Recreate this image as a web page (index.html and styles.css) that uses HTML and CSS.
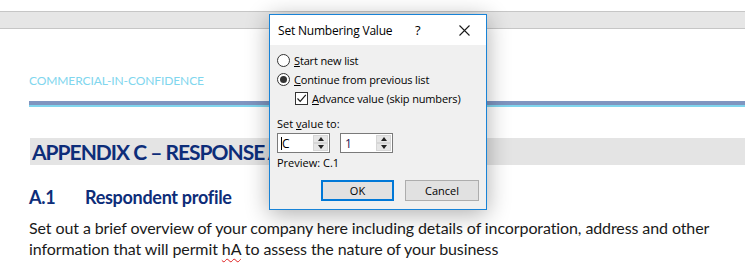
FILE: index.html
```html
<!DOCTYPE html>
<html lang="en">

<head>
    <meta charset="utf-8">
    <title>Set Numbering Value</title>
    <link rel="stylesheet" href="styles.css">
</head>

<body>
    <div class="ruler-band"></div>

    <main class="page">
        <p class="confidential">COMMERCIAL-IN-CONFIDENCE</p>
        <div class="header-rule"></div>
        <h1 class="appendix">APPENDIX C – RESPONSE A</h1>
        <h2 class="section"><span class="num">A.1</span>Respondent profile</h2>
        <p class="body-text">Set out a brief overview of your company here including details of incorporation, address and other
            information that will permit <span class="spell">hA</span> to assess the nature of your business</p>
    </main>

    <!-- dialog sits on top of the document -->
    <div class="dialog">
        <div class="title-bar">
            <span class="title">Set Numbering Value</span>
            <span class="help">?</span>
            <svg class="close" width="11" height="11" viewBox="0 0 11 11">
                <path d="M0.5 0.5 L10.5 10.5 M10.5 0.5 L0.5 10.5" stroke="#1a1a1a" stroke-width="1.1" fill="none" />
            </svg>
        </div>
        <div class="dialog-body">
            <label class="option">
                <span class="radio"></span>
                <span><u>S</u>tart new list</span>
            </label>
            <label class="option">
                <span class="radio checked"></span>
                <span><u>C</u>ontinue from previous list</span>
            </label>
            <label class="option sub">
                <span class="checkbox">
                    <svg width="11" height="11" viewBox="0 0 11 11">
                        <path d="M1.5 5.5 L4.2 8.3 L9.8 1.8" stroke="#1a1a1a" stroke-width="1.2" fill="none" />
                    </svg>
                </span>
                <span><u>A</u>dvance value (skip numbers)</span>
            </label>

            <p class="set-label">Set <u>v</u>alue to:</p>
            <div class="inputs">
                <div class="spin">
                    <span class="spin-value"><span class="caret"></span>C</span>
                    <span class="spin-buttons">
                        <span class="spin-btn"><span class="arrow up"></span></span>
                        <span class="spin-btn"><span class="arrow down"></span></span>
                    </span>
                </div>
                <div class="spin">
                    <span class="spin-value level">1</span>
                    <span class="spin-buttons">
                        <span class="spin-btn"><span class="arrow up"></span></span>
                        <span class="spin-btn"><span class="arrow down"></span></span>
                    </span>
                </div>
            </div>
            <p class="preview">Preview: C.1</p>

            <div class="buttons">
                <button class="btn default">OK</button>
                <button class="btn">Cancel</button>
            </div>
        </div>
    </div>
</body>

</html>
```

FILE: styles.css
```css
* {
    padding: 0;
    margin: 0;
    box-sizing: border-box;
}

body {
    width: 745px;
    height: 279px;
    overflow: hidden;
    background-color: white;
    position: relative;
    font-family: Lato, sans-serif;
}

.ruler-band {
    margin-top: 11px;
    height: 18px;
    background-color: #e6e6e6;
    border-top: 1px solid #c6c6c6;
    border-bottom: 1px solid #c6c6c6;
}

.page {
    padding-left: 29px;
}

.confidential {
    margin-top: 44px;
    font-size: 12px;
    line-height: 16px;
    color: #80d6ee;
    letter-spacing: -0.1px;
}

.header-rule {
    margin-top: 12px;
    height: 6px;
    border-top: 4px solid #7f95c0;
    background-color: #80d6ee;
}

.appendix {
    margin-top: 31px;
    margin-left: 1px;
    height: 27px;
    padding-left: 2px;
    background-color: #e4e4e4;
    font-size: 21px;
    line-height: 28px;
    font-weight: 700;
    color: #0d2d79;
    letter-spacing: -1px;
}

.section {
    margin-top: 22px;
    font-size: 18px;
    line-height: 20px;
    font-weight: 700;
    color: #0d2d79;
    letter-spacing: -0.3px;
}

.section .num {
    display: inline-block;
    width: 56px;
}

.body-text {
    margin-top: 10px;
    font-size: 16px;
    line-height: 21px;
    color: #1a1a1a;
    width: 700px;
    letter-spacing: -0.1px;
}

.spell {
    text-decoration: underline wavy #e02020;
    text-decoration-thickness: 1px;
    text-underline-offset: 3px;
}

/* dialog */

.dialog {
    position: absolute;
    left: 269px;
    top: 14px;
    width: 218px;
    height: 196px;
    border: 1px solid #1883d7;
    background-color: #f0f0f0;
    box-shadow: 0 4px 22px rgba(0, 0, 0, 0.32);
    font-family: "Open Sans", sans-serif;
    font-size: 11px;
    color: #000;
}

.title-bar {
    height: 30px;
    background-color: white;
    display: flex;
    align-items: center;
    padding-left: 8px;
}

.title {
    font-size: 12px;
    letter-spacing: -0.2px;
    width: 137px;
}

.help {
    font-size: 13px;
    width: 44px;
}

.dialog-body {
    padding: 6px 0 0 7px;
}

.option {
    display: flex;
    align-items: center;
    gap: 4px;
    height: 19px;
    letter-spacing: -0.15px;
}

.option.sub {
    padding-left: 18px;
}

.radio {
    width: 13px;
    height: 13px;
    border: 1px solid #333;
    border-radius: 50%;
    background-color: white;
    display: flex;
    align-items: center;
    justify-content: center;
}

.radio.checked::after {
    content: "";
    width: 7px;
    height: 7px;
    border-radius: 50%;
    background-color: #333;
}

.checkbox {
    width: 13px;
    height: 13px;
    border: 1px solid #333;
    background-color: white;
    display: flex;
    align-items: center;
    justify-content: center;
}

.set-label {
    margin-top: 8px;
    line-height: 15px;
}

.inputs {
    display: flex;
    gap: 10px;
    margin-top: 2px;
}

.spin {
    display: flex;
    width: 53px;
    height: 20px;
    border: 1px solid #7a7a7a;
    background-color: white;
    padding: 1px;
}

.spin-value {
    flex: 1;
    display: flex;
    align-items: center;
    padding-left: 2px;
    font-size: 12px;
}

.spin-value.level {
    color: #2a1050;
    padding-left: 3px;
}

.caret {
    width: 1px;
    height: 13px;
    background-color: #000;
}

.spin-buttons {
    width: 15px;
    display: flex;
    flex-direction: column;
}

.spin-btn {
    flex: 1;
    background-color: #e6e6e6;
    border: 1px solid #d6d6d6;
    display: flex;
    align-items: center;
    justify-content: center;
}

.arrow {
    width: 0;
    height: 0;
    border-left: 3.5px solid transparent;
    border-right: 3.5px solid transparent;
}

.arrow.up {
    border-bottom: 4px solid #222;
}

.arrow.down {
    border-top: 4px solid #222;
}

.preview {
    margin-top: 2px;
    line-height: 15px;
}

.buttons {
    display: flex;
    gap: 11px;
    margin-top: 10px;
    padding-left: 44px;
}

.btn {
    width: 74px;
    height: 21px;
    background-color: #e1e1e1;
    border: 1px solid #adadad;
    font-family: "Open Sans", sans-serif;
    font-size: 11px;
    color: #000;
}

.btn.default {
    width: 73px;
    border: 2px solid #0078d7;
}
```
